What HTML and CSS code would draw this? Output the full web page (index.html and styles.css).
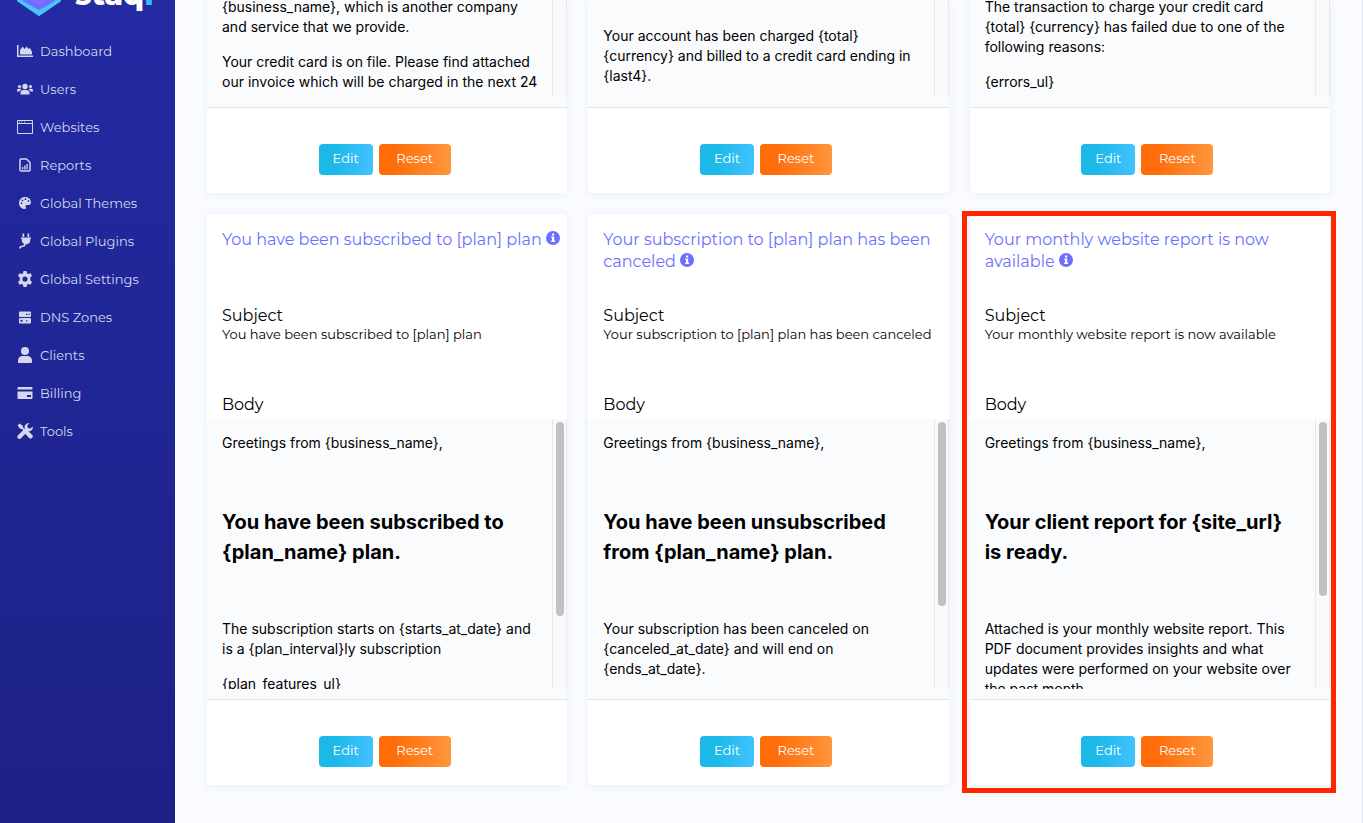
FILE: index.html
```html
<!DOCTYPE html>
<html lang="en">
<head>
  <meta charset="UTF-8">
  <meta name="viewport" content="width=device-width, initial-scale=1.0">
  <title>Email Templates</title>
  <link rel="stylesheet" href="styles.css">
</head>
<body>
  <!-- shared info icon -->
  <svg class="symbols" aria-hidden="true">
    <symbol id="info" viewBox="0 0 14 14">
      <circle cx="7" cy="7" r="7" fill="#6c70ff"/>
      <path d="M6 2.6h2.2v2H6zM5.4 5.6h2.8v4h.8v1.4H5.2V9.6H6V7h-.6z" fill="#fff"/>
    </symbol>
  </svg>

  <div class="layout">
    <aside class="sidebar">
      <div class="brand">
        <svg class="brand-mark" width="44" height="46" viewBox="0 0 44 46" aria-hidden="true">
          <path d="M0 11v20l22 15 22-15V11L22 0z" fill="#58b8f6"/>
          <path d="M0 31l22 15 22-15v-3L22 42 0 28z" fill="#49c7fb"/>
          <path d="M6 12v19l16 9 16-9V12L22 4z" fill="#6c70ff"/>
          <path d="M12 12v16l10 7 10-7V12z" fill="#8a6cff"/>
        </svg>
        <span class="brand-name">staq<span class="brand-accent">i</span></span>
      </div>
      <nav class="menu">
        <a href="#">
          <svg viewBox="0 0 16 16"><path d="M0 2h1.5v10.5H16V14H0z"/><path d="M3 11.500V7l2.600-3.500L7.500 6l2-2.500 2 2.500 1.500-1 2 4v2.500z"/></svg>
          Dashboard
        </a>
        <a href="#">
          <svg viewBox="0 0 16 16"><circle cx="8" cy="5.500" r="2.700"/><circle cx="2.500" cy="5.500" r="1.600"/><circle cx="13.500" cy="5.500" r="1.600"/><path d="M3.500 13.500v-1.300A3.200 3.200 0 0 1 6.700 9h2.600a3.200 3.200 0 0 1 3.200 3.200v1.300zM0 10.500V9.300a1.500 1.500 0 0 1 1.500-1.500h2q.6 0 1 .5Q3 9.200 2.800 10.500zM16 10.500V9.300a1.500 1.500 0 0 0-1.500-1.500h-2q-.6 0-1 .5 1.500.9 1.700 2.200z"/></svg>
          Users
        </a>
        <a href="#">
          <svg viewBox="0 0 16 16"><path class="line" d="M.5 1.500h15v13H.5zM.5 4.500h15M2 3h1M4.500 3h1M7 3h1"/></svg>
          Websites
        </a>
        <a href="#">
          <svg viewBox="0 0 16 16"><path class="line thick" d="M4 2h5.500L13 5.500V13a1 1 0 0 1-1 1H4a1 1 0 0 1-1-1V3a1 1 0 0 1 1-1z"/><path d="M5 10h1.300v2.500H5zM7.200 8.500h1.300v4H7.200zM9.400 7h1.300v5.500H9.400z"/></svg>
          Reports
        </a>
        <a href="#">
          <svg viewBox="0 0 16 16"><path fill-rule="evenodd" d="M8 2c3.500 0 6 2.300 6 5.200 0 2-1.500 2.800-3 2.800H9.600c-1 0-1.400.9-.9 1.700.5.900.3 2.300-.9 2.300C4.400 14 2 11.300 2 8s2.600-6 6-6zM4.500 7.300a.9.900 0 1 0 0 1.800.9.900 0 0 0 0-1.800zM5.500 4.400a.9.900 0 1 0 0 1.800.9.900 0 0 0 0-1.800zM8.500 3.300a.9.900 0 1 0 0 1.800.9.900 0 0 0 0-1.800zM11.500 5a.9.900 0 1 0 0 1.800.9.900 0 0 0 0-1.800z"/></svg>
          Global Themes
        </a>
        <a href="#">
          <svg viewBox="0 0 16 16"><path d="M5.500.500h1.700v3.500H5.500zM10.500.500h1.700v3.500h-1.700zM4 4.500h10V6h-.8v1.500c0 2-1.400 3.500-3.300 3.800H8C6.200 11 4.800 9.500 4.800 7.500V6H4z"/><path class="line thick" d="M8 10.500c0 2.500-1 2.800-2.500 2.800S3 14 2.600 15.500"/></svg>
          Global Plugins
        </a>
        <a href="#">
          <svg viewBox="0 0 16 16"><path fill-rule="evenodd" d="M6.500 0h3l.5 2.200 1.300.8 2.200-.8L15 4.800l-1.700 1.600v1.600l.1 1.500L15 11l-1.500 2.700-2.200-.7-1.300.8L9.500 16h-3L6 13.800 4.700 13l-2.200.7L1 11l1.700-1.500V6.400L1 4.800l1.500-2.600 2.200.8L6 2.200zM8 5.400a2.600 2.600 0 1 0 0 5.200 2.600 2.600 0 0 0 0-5.200z"/></svg>
          Global Settings
        </a>
        <a href="#">
          <svg viewBox="0 0 16 16"><path fill-rule="evenodd" d="M3 2.500h10a1 1 0 0 1 1 1V7a1 1 0 0 1-1 1H3a1 1 0 0 1-1-1V3.500a1 1 0 0 1 1-1zM9 4.700v1.300h1.300V4.700zM11.400 4.700v1.300h1.300V4.700zM3 9h10a1 1 0 0 1 1 1v3.500a1 1 0 0 1-1 1H3a1 1 0 0 1-1-1V10a1 1 0 0 1 1-1zM3.500 10.700v2h2v-2zM9 11.200v1.300h1.300v-1.300z"/></svg>
          DNS Zones
        </a>
        <a href="#">
          <svg viewBox="0 0 16 16"><circle cx="8" cy="4" r="4"/><path d="M1 16v-2.500A4.500 4.500 0 0 1 5.500 9h5a4.500 4.500 0 0 1 4.500 4.500V15a1 1 0 0 1-1 1z"/></svg>
          Clients
        </a>
        <a href="#">
          <svg viewBox="0 0 16 16"><path fill-rule="evenodd" d="M1.500 2h13q1 0 1 1v1.500h-15V3q0-1 1-1zM.5 6.500h15V13q0 1-1 1h-13q-1 0-1-1zM10 10v2h4v-2z"/></svg>
          Billing
        </a>
        <a href="#">
          <svg viewBox="0 0 16 16"><path d="M.5 2.500L2.500.5l3.300 2.300.4 2 3 3 1.500-.3 4.800 4.800a1.500 1.500 0 0 1 0 2l-1 1a1.500 1.500 0 0 1-2 0L7.800 10.600l.2-1.500-3-3-2-.4z"/><path d="M15.700 3.500a4 4 0 0 1-4.900 4.800L4 15.300a2 2 0 0 1-3-3l6.800-6.800A4 4 0 0 1 12.500.3L10.300 2.500l.5 2.500 2.600.6z"/></svg>
          Tools
        </a>
      </nav>
    </aside>

    <main class="content">
      <div class="cards">
        <!-- first row, scrolled partly out of view -->
        <section class="card card-scrolled">
          <div class="preview">
            <div class="mail">
              <p>{business_name}, which is another company and service that we provide.</p>
              <p>Your credit card is on file. Please find attached our invoice which will be charged in the next 24</p>
            </div>
            <div class="track"></div>
          </div>
          <div class="card-footer">
            <button type="button" class="btn btn-edit">Edit</button>
            <button type="button" class="btn btn-reset">Reset</button>
          </div>
        </section>
        <section class="card card-scrolled">
          <div class="preview">
            <div class="mail mail-spaced">
              <p>Your account has been charged {total} {currency} and billed to a credit card ending in {last4}.</p>
            </div>
            <div class="track"></div>
          </div>
          <div class="card-footer">
            <button type="button" class="btn btn-edit">Edit</button>
            <button type="button" class="btn btn-reset">Reset</button>
          </div>
        </section>
        <section class="card card-scrolled">
          <div class="preview">
            <div class="mail">
              <p>The transaction to charge your credit card {total} {currency} has failed due to one of the following reasons:</p>
              <p>{errors_ul}</p>
            </div>
            <div class="track"></div>
          </div>
          <div class="card-footer">
            <button type="button" class="btn btn-edit">Edit</button>
            <button type="button" class="btn btn-reset">Reset</button>
          </div>
        </section>

        <section class="card">
          <div class="card-header">
            <h3 class="title">You have been subscribed to [plan] plan <svg class="info"><use href="#info"/></svg></h3>
            <h4 class="label">Subject</h4>
            <p class="subject">You have been subscribed to [plan] plan</p>
            <h4 class="label">Body</h4>
          </div>
          <div class="preview">
            <div class="mail">
              <p>Greetings from {business_name},</p>
              <h2>You have been subscribed to {plan_name} plan.</h2>
              <p>The subscription starts on {starts_at_date} and is a {plan_interval}ly subscription</p>
              <p>{plan_features_ul}</p>
            </div>
            <div class="track"><div class="thumb" style="height: 194px"></div></div>
          </div>
          <div class="card-footer">
            <button type="button" class="btn btn-edit">Edit</button>
            <button type="button" class="btn btn-reset">Reset</button>
          </div>
        </section>
        <section class="card">
          <div class="card-header">
            <h3 class="title">Your subscription to [plan] plan has been canceled <svg class="info"><use href="#info"/></svg></h3>
            <h4 class="label">Subject</h4>
            <p class="subject">Your subscription to [plan] plan has been canceled</p>
            <h4 class="label">Body</h4>
          </div>
          <div class="preview">
            <div class="mail">
              <p>Greetings from {business_name},</p>
              <h2>You have been unsubscribed from {plan_name} plan.</h2>
              <p>Your subscription has been canceled on {canceled_at_date} and will end on {ends_at_date}.</p>
            </div>
            <div class="track"><div class="thumb" style="height: 184px"></div></div>
          </div>
          <div class="card-footer">
            <button type="button" class="btn btn-edit">Edit</button>
            <button type="button" class="btn btn-reset">Reset</button>
          </div>
        </section>
        <section class="card highlighted">
          <div class="card-header">
            <h3 class="title">Your monthly website report is now available <svg class="info"><use href="#info"/></svg></h3>
            <h4 class="label">Subject</h4>
            <p class="subject">Your monthly website report is now available</p>
            <h4 class="label">Body</h4>
          </div>
          <div class="preview">
            <div class="mail">
              <p>Greetings from {business_name},</p>
              <h2>Your client report for {site_url} is ready.</h2>
              <p>Attached is your monthly website report. This PDF document provides insights and what updates were performed on your website over the past month.</p>
            </div>
            <div class="track"><div class="thumb" style="height: 174px"></div></div>
          </div>
          <div class="card-footer">
            <button type="button" class="btn btn-edit">Edit</button>
            <button type="button" class="btn btn-reset">Reset</button>
          </div>
        </section>
      </div>
    </main>
  </div>
</body>
</html>
```

FILE: styles.css
```css
* {
  box-sizing: border-box;
}
body {
  margin: 0;
  font-family: Montserrat, Inter, sans-serif;
  font-size: 13px;
  color: #000;
  background-color: #fafbff;
}
h2, h3, h4, p {
  margin: 0;
}
.symbols {
  display: none;
}
.layout {
  display: flex;
  height: 100vh;
  overflow: hidden;
}

/* sidebar */
.sidebar {
  flex: 0 0 175px;
  background: linear-gradient(#232aa2, #1d2186);
}
.brand {
  display: flex;
  gap: 14px;
  height: 62px;
  margin-top: -30px;
  padding-left: 17px;
}
.brand-name {
  color: #fff;
  font-size: 30px;
  font-weight: 800;
  line-height: 50px;
}
.brand-accent {
  color: #33bdf5;
}
.menu a {
  display: flex;
  align-items: center;
  gap: 7px;
  height: 38px;
  padding-left: 17px;
  color: #d4d7ee;
  text-decoration: none;
}
.menu svg {
  width: 16px;
  height: 16px;
  fill: #d4d7ee;
}
.menu .line {
  fill: none;
  stroke: #d4d7ee;
}
.menu .thick {
  stroke-width: 1.5;
}

/* cards */
.content {
  flex: 1;
  padding: 0 32px;
  border-right: 1px solid #e3e5ec;
}
.cards {
  display: grid;
  grid-template-columns: repeat(3, 1fr);
  gap: 21px;
}
.card {
  position: relative;
  background: #fff;
  border-radius: 4px;
  box-shadow: 0 1px 8px #e4edfc;
}
.card-header {
  padding: 15px 0 5px 15px;
}
.title {
  height: 44px;
  margin-bottom: 33px;
  color: #6c70ff;
  font-size: 16px;
  font-weight: 400;
  line-height: 22px;
}
.info {
  width: 14px;
  height: 14px;
}
.label {
  font-size: 16px;
  font-weight: 400;
  line-height: 19px;
}
.subject {
  margin-bottom: 51px;
  line-height: 19px;
}
.preview {
  display: flex;
  height: 280px;
  padding-bottom: 10px;
  background: #fafbfd;
}
.mail {
  flex: 1;
  overflow: hidden;
  padding: 14px 15px 0;
  font-family: Inter, sans-serif;
  font-size: 14px;
  line-height: 20px;
}
.mail p + p {
  margin-top: 15px;
}
.mail h2 {
  margin: 54px 0 52px;
  font-size: 20px;
  line-height: 30px;
}
.track {
  width: 15px;
  padding: 3px;
  background: #fafafa;
  border: solid #e8e8e8;
  border-width: 0 1px;
}
.thumb {
  width: 8px;
  border-radius: 4px;
  background: #c1c1c1;
}
.card-footer {
  display: flex;
  justify-content: center;
  gap: 6px;
  padding: 36px 5px 18px 0;
  border-top: 1px solid #e2e4ec;
}
.btn {
  height: 31px;
  padding: 0 0 4px;
  border: 0;
  border-radius: 4px;
  color: #fff;
  font: inherit;
}
.btn-edit {
  width: 54px;
  background: linear-gradient(90deg, #1cb9e8 30%, #42c2ff);
}
.btn-reset {
  width: 72px;
  background: linear-gradient(90deg, #ff6c0a 20%, #ff963c);
}

/* first row shows only the end of each mail */
.card-scrolled .preview {
  height: 107px;
}
.card-scrolled .mail {
  display: flex;
  flex-direction: column;
  justify-content: flex-end;
  padding-bottom: 5px;
}
.card-scrolled .mail-spaced {
  padding-bottom: 11px;
}

.highlighted::after {
  content: "";
  position: absolute;
  inset: -3px -6px -8px -8px;
  border: 5px solid #ff2600;
}
```
